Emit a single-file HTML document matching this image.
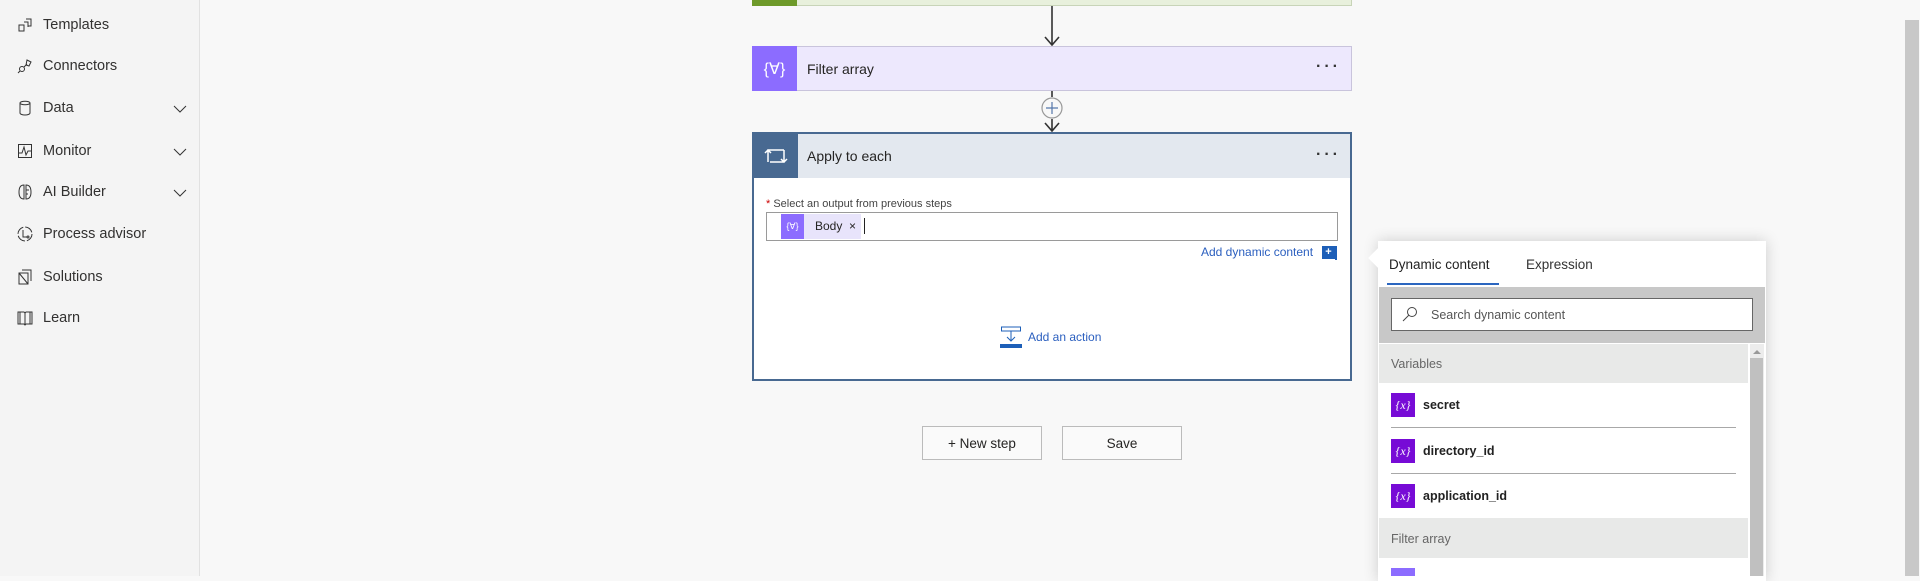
<!DOCTYPE html>
<html><head><meta charset="utf-8"><style>
*{box-sizing:border-box;margin:0;padding:0}
body{width:1920px;height:576px;overflow:hidden;background:#f8f8f8;font-family:"Liberation Sans",sans-serif;color:#252423;position:relative}
.abs{position:absolute}
.side{left:0;top:0;width:200px;height:576px;background:#f4f4f4;border-right:1px solid #e1e1e1}
.nav{position:absolute;left:17px;font-size:14.5px;color:#323130;display:flex;align-items:center;height:20px}
.nav svg{width:16px;height:16px;margin-right:10px}
.chev{position:absolute;left:173px;width:14px;height:10px}
.dots{position:absolute;font-size:16px;letter-spacing:3px;color:#333;font-weight:bold}
.vicon{position:absolute;left:1391px;width:24px;height:24px;background:#770bd6;color:#fff;font-size:12px;font-style:italic;font-family:"Liberation Serif",serif;display:flex;align-items:center;justify-content:center}
.vtext{position:absolute;left:1423px;font-size:12.5px;font-weight:bold;color:#222}
.sep{position:absolute;left:1391px;width:345px;height:1px;background:#a8a8a8}
</style></head><body>
<div class="abs side"></div>
<div class="nav" style="top:15px"><svg viewBox="0 0 16 16" fill="none" stroke="#333" stroke-width="1"><path d="M2 8h5v6H2zM7 5h4v5M9 2h5v7h-3"/></svg>Templates</div>
<div class="nav" style="top:56px"><svg viewBox="0 0 16 16" fill="none" stroke="#333" stroke-width="1"><circle cx="5" cy="11" r="2.5"/><path d="M10 2l4 2-2 4-3-1zM7 9l3-3M1 15l2-2"/></svg>Connectors</div>
<div class="nav" style="top:98px"><svg viewBox="0 0 16 16" fill="none" stroke="#333" stroke-width="1"><ellipse cx="8" cy="3" rx="5" ry="1.8"/><path d="M3 3v10c0 1 2 2 5 2s5-1 5-2V3"/></svg>Data</div>
<div class="nav" style="top:141px"><svg viewBox="0 0 16 16" fill="none" stroke="#333" stroke-width="1"><rect x="1.5" y="1.5" width="13" height="13"/><path d="M2 10h3l2-6 2 8 2-4h3"/></svg>Monitor</div>
<div class="nav" style="top:182px"><svg viewBox="0 0 16 16" fill="none" stroke="#333" stroke-width="1"><path d="M7 1C3 1 2 4 2 8s1 7 5 7V1zM9 1c4 0 5 3 5 7s-1 7-5 7V1zM9 6h3M9 10h2"/></svg>AI Builder</div>
<div class="nav" style="top:224px"><svg viewBox="0 0 16 16" fill="none" stroke="#333" stroke-width="1"><circle cx="8" cy="8" r="7" stroke-dasharray="9 2"/><path d="M6 4v7h4"/><circle cx="11" cy="11" r="1"/></svg>Process advisor</div>
<div class="nav" style="top:267px"><svg viewBox="0 0 16 16" fill="none" stroke="#333" stroke-width="1"><path d="M2 4h9v11H2zM5 1h9v11M2 4l9 11"/></svg>Solutions</div>
<div class="nav" style="top:308px"><svg viewBox="0 0 16 16" fill="none" stroke="#333" stroke-width="1"><path d="M1 2h6l1 1 1-1h6v12H9l-1 1-1-1H1zM8 3v12M3 2v12M13 2v12"/></svg>Learn</div>
<svg class="chev" style="top:104px" viewBox="0 0 14 10"><path d="M1 2l6 6 6-6" fill="none" stroke="#333"/></svg>
<svg class="chev" style="top:147px" viewBox="0 0 14 10"><path d="M1 2l6 6 6-6" fill="none" stroke="#333"/></svg>
<svg class="chev" style="top:188px" viewBox="0 0 14 10"><path d="M1 2l6 6 6-6" fill="none" stroke="#333"/></svg>

<!-- top green card -->
<div class="abs" style="left:752px;top:-10px;width:600px;height:16px;background:#e8f0dc;border:1px solid #c8d4b8"></div>
<div class="abs" style="left:752px;top:0;width:45px;height:6px;background:#6e9a2a"></div>
<svg class="abs" style="left:1040px;top:0" width="24" height="140" viewBox="0 0 24 140">
<path d="M12 6v39M5 37l7 8 7-8" fill="none" stroke="#333" stroke-width="1.6"/>
<path d="M12 91v6M12 119v12M5 123l7 8 7-8" fill="none" stroke="#333" stroke-width="1.6"/>
<circle cx="12" cy="108" r="10" fill="#f8f8f8" stroke="#999" stroke-width="1.2"/>
<path d="M12 102v12M6 108h12" stroke="#5577aa" stroke-width="1.2"/>
</svg>
<!-- filter array -->
<div class="abs" style="left:752px;top:46px;width:600px;height:45px;background:#ede8fd;border:1px solid #c9c4dc"></div>
<div class="abs" style="left:752px;top:46px;width:45px;height:45px;background:#8c6cff;color:#fff;font-size:16px;display:flex;align-items:center;justify-content:center">{∀}</div>
<div class="abs" style="left:807px;top:61px;font-size:14px">Filter array</div>
<div class="dots" style="left:1316px;top:58px">···</div>
<!-- apply to each -->
<div class="abs" style="left:752px;top:132px;width:600px;height:249px;background:#fff;border:2px solid #486991"></div>
<div class="abs" style="left:754px;top:134px;width:596px;height:44px;background:#e3e8ef"></div>
<div class="abs" style="left:754px;top:134px;width:44px;height:44px;background:#486991"><svg width="44" height="44" viewBox="0 0 44 44" fill="none" stroke="#fff" stroke-width="1.5"><path d="M14 28v-12h16M11 19l3-3 3 3M30 16v12H16M27 25l3 3 3-3"/></svg></div>
<div class="abs" style="left:807px;top:148px;font-size:14px">Apply to each</div>
<div class="dots" style="left:1316px;top:146px">···</div>
<div class="abs" style="left:766px;top:198px;font-size:11px;color:#444"><span style="color:#c00">*</span> Select an output from previous steps</div>
<div class="abs" style="left:766px;top:212px;width:572px;height:29px;border:1px solid #9a9a9a;background:#fff"></div>
<div class="abs" style="left:781px;top:214px;width:80px;height:25px;background:#e8e4fb"></div>
<div class="abs" style="left:781px;top:214px;width:23px;height:25px;background:#8c6cff;color:#fff;font-size:9px;display:flex;align-items:center;justify-content:center">{∀}</div>
<div class="abs" style="left:815px;top:219px;font-size:12px">Body&nbsp; ×</div>
<div class="abs" style="left:864px;top:218px;width:1px;height:16px;background:#222"></div>
<div class="abs" style="left:1201px;top:245px;font-size:12px;color:#2b5fbf">Add dynamic content</div>
<div class="abs" style="left:1322px;top:246px;width:13px;height:13px;background:#1d5fb8;color:#fff;font-size:11px;line-height:13px;text-align:center;font-weight:bold">+</div>
<div class="abs" style="left:1335px;top:246px;width:2px;height:14px;background:#1d5fb8"></div>
<svg class="abs" style="left:1000px;top:326px" width="22" height="22" viewBox="0 0 22 22"><rect x="1.5" y="1" width="19" height="4" fill="none" stroke="#1d5fb8"/><path d="M11 5v10M7 11l4 4 4-4" fill="none" stroke="#1d5fb8"/><rect x="0" y="18" width="22" height="4" fill="#1d5fb8"/></svg>
<div class="abs" style="left:1028px;top:330px;font-size:12px;color:#2b5fbf">Add an action</div>
<!-- buttons -->
<div class="abs" style="left:922px;top:426px;width:120px;height:34px;border:1px solid #bbb;background:#fafafa;font-size:13.5px;display:flex;align-items:center;justify-content:center">+ New step</div>
<div class="abs" style="left:1062px;top:426px;width:120px;height:34px;border:1px solid #bbb;background:#fafafa;font-size:13.5px;display:flex;align-items:center;justify-content:center">Save</div>
<!-- dynamic panel -->
<div class="abs" style="left:1378px;top:241px;width:388px;height:340px;background:#fff;box-shadow:0 0 14px rgba(0,0,0,0.18)"></div>
<div class="abs" style="left:1371px;top:251px;width:14px;height:14px;background:#fff;transform:rotate(45deg)"></div>
<div class="abs" style="left:1389px;top:257px;font-size:13.5px;color:#222">Dynamic content</div>
<div class="abs" style="left:1526px;top:257px;font-size:13.5px;color:#333">Expression</div>
<div class="abs" style="left:1387px;top:283px;width:112px;height:2px;background:#2b66c0"></div>
<div class="abs" style="left:1379px;top:287px;width:386px;height:56px;background:#c8c8c8"></div>
<div class="abs" style="left:1391px;top:298px;width:362px;height:33px;background:#fff;border:1px solid #666"></div>
<svg class="abs" style="left:1402px;top:306px" width="16" height="16" viewBox="0 0 16 16" fill="none" stroke="#444"><circle cx="10" cy="6" r="4.5"/><path d="M7 9l-6 6"/></svg>
<div class="abs" style="left:1431px;top:308px;font-size:12.5px;color:#555">Search dynamic content</div>
<div class="abs" style="left:1379px;top:344px;width:369px;height:39px;background:#e8e9e8"></div>
<div class="abs" style="left:1391px;top:357px;font-size:12.5px;color:#666">Variables</div>
<div class="abs" style="left:1750px;top:344px;width:14px;height:232px;background:#ececec"></div>
<div class="abs" style="left:1750px;top:358px;width:13px;height:218px;background:#c0c0c0"></div>
<div class="abs" style="left:1753px;top:350px;width:0;height:0;border-left:4px solid transparent;border-right:4px solid transparent;border-bottom:4px solid #999"></div>
<div class="vicon" style="top:393px">{x}</div><div class="vtext" style="top:398px">secret</div>
<div class="sep" style="top:427px"></div>
<div class="vicon" style="top:439px">{x}</div><div class="vtext" style="top:444px">directory_id</div>
<div class="sep" style="top:473px"></div>
<div class="vicon" style="top:484px">{x}</div><div class="vtext" style="top:489px">application_id</div>
<div class="abs" style="left:1379px;top:518px;width:369px;height:40px;background:#e8e9e8"></div>
<div class="abs" style="left:1391px;top:532px;font-size:12.5px;color:#666">Filter array</div>
<div class="abs" style="left:1391px;top:568px;width:24px;height:8px;background:#8c6cff"></div>
<div class="abs" style="left:1905px;top:20px;width:14px;height:556px;background:#c8c8c8"></div>
</body></html>
